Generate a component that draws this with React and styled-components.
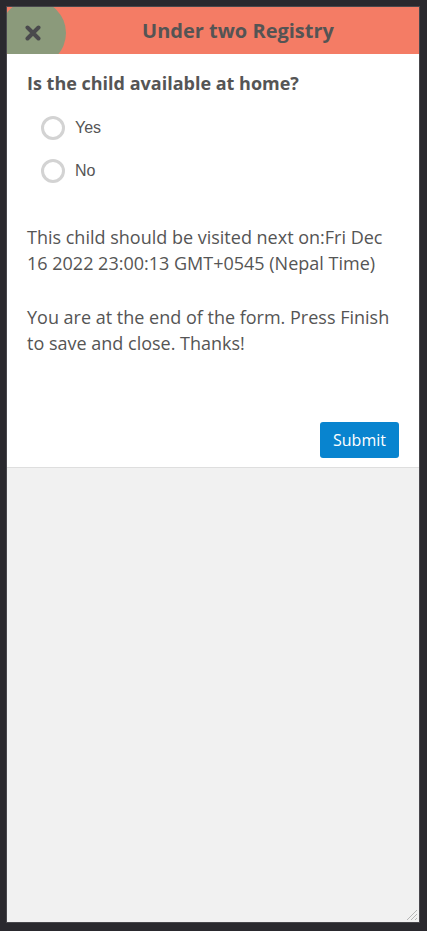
import React from "react";
import styled, { createGlobalStyle } from "styled-components";

const Global = createGlobalStyle`
  html, body { margin: 0; padding: 0; background: #2a292e; }
  body { font-family: "Open Sans", "Noto Sans", sans-serif; }
  * { box-sizing: border-box; }
`;

const Frame = styled.div`
  width: 427px;
  height: 931px;
  padding: 6px 7px 8px 6px;
  background: #2a292e;
`;

const Window = styled.div`
  height: 100%;
  border: 1px solid #48474c;
  display: flex;
  flex-direction: column;
  background: #f1f1f1;
  position: relative;
`;

const Header = styled.header`
  position: relative;
  height: 47px;
  flex: none;
  background: #f47c65;
  overflow: hidden;
  display: flex;
  align-items: center;
  justify-content: center;
  padding-left: 50px;
`;

const CloseButton = styled.button`
  position: absolute;
  left: -7px;
  top: -7px;
  width: 66px;
  height: 66px;
  border-radius: 50%;
  border: none;
  background: #8b9a7b;
  display: flex;
  align-items: center;
  justify-content: center;
  padding: 0;
  cursor: pointer;
`;

const Title = styled.h1`
  margin: 0;
  font-family: "Open Sans", "Noto Sans", sans-serif;
  font-weight: 700;
  font-size: 20px;
  color: #545454;
`;

const FormBody = styled.main`
  background: #fff;
  border-bottom: 1px solid #dedede;
  padding: 17px 20px 9px 20px;
  display: flex;
  flex-direction: column;
`;

const Question = styled.h2`
  margin: 0;
  font-size: 18px;
  line-height: 24px;
  font-weight: 700;
  color: #555;
`;

const Options = styled.div`
  display: flex;
  flex-direction: column;
  gap: 19px;
  padding: 21px 0 0 14px;
`;

const Option = styled.label`
  display: flex;
  align-items: center;
  gap: 10px;
  font-family: "Liberation Sans", Arial, sans-serif;
  font-size: 16px;
  color: #555;
  height: 24px;
`;

const Radio = styled.span`
  width: 24px;
  height: 24px;
  border-radius: 50%;
  border: 3px solid #d3d3d3;
  background: #fff;
`;

const Note = styled.p`
  margin: ${(p) => p.$top}px 0 0 0;
  font-size: 18px;
  line-height: 26px;
  color: #555;
`;

const Actions = styled.div`
  display: flex;
  justify-content: flex-end;
  margin-top: 66px;
`;

const SubmitButton = styled.button`
  background: #0884cf;
  color: #fff;
  border: none;
  border-radius: 3px;
  font-family: "Open Sans", "Noto Sans", sans-serif;
  font-size: 16px;
  height: 36px;
  width: 79px;
  padding: 0;
`;

const Grip = styled.svg`
  position: absolute;
  right: 1px;
  bottom: 1px;
`;

export default function App() {
  return (
    <>
      <Global />
      <Frame>
        <Window>
          <Header>
            <CloseButton aria-label="Close">
              <svg width="16" height="16" viewBox="0 0 16 16">
                <path d="M2.5 2.5 L13.5 13.5 M13.5 2.5 L2.5 13.5" stroke="#4a4a4d" strokeWidth="4" strokeLinecap="round" />
              </svg>
            </CloseButton>
            <Title>Under two Registry</Title>
          </Header>
          <FormBody>
            <Question>Is the child available at home?</Question>
            <Options>
              <Option><Radio />Yes</Option>
              <Option><Radio />No</Option>
            </Options>
            <Note $top={41}>
              This child should be visited next on:Fri Dec 16 2022 23:00:13 GMT+0545 (Nepal Time)
            </Note>
            <Note $top={28}>
              You are at the end of the form. Press Finish to save and close. Thanks!
            </Note>
            <Actions>
              <SubmitButton>Submit</SubmitButton>
            </Actions>
          </FormBody>
          <Grip width="14" height="14" viewBox="0 0 14 14">
            <path d="M13 3 L3 13 M13 7 L7 13 M13 11 L11 13" stroke="#b5b5b5" strokeWidth="1" />
          </Grip>
        </Window>
      </Frame>
    </>
  );
}
